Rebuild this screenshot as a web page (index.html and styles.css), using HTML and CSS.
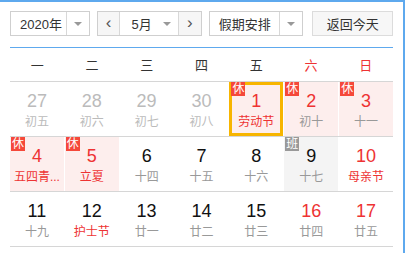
FILE: index.html
```html
<!DOCTYPE html>
<html lang="zh-CN">

<head>
    <meta charset="UTF-8">
    <title>万年历</title>
    <link rel="stylesheet" href="styles.css">
</head>

<body>
    <div class="calendar">
        <div class="toolbar">
            <div class="select year-select">
                <span class="select-text">2020年</span>
                <span class="select-arrow"><i class="caret"></i></span>
            </div>
            <div class="select month-select">
                <span class="step">&lsaquo;</span>
                <span class="month-body">
                    <span class="month-text">5月</span>
                    <i class="caret"></i>
                </span>
                <span class="step">&rsaquo;</span>
            </div>
            <div class="select holiday-select">
                <span class="select-text">假期安排</span>
                <span class="select-arrow"><i class="caret"></i></span>
            </div>
            <button class="today-btn">返回今天</button>
        </div>

        <div class="weekdays">
            <span>一</span>
            <span>二</span>
            <span>三</span>
            <span>四</span>
            <span>五</span>
            <span class="red">六</span>
            <span class="red">日</span>
        </div>

        <div class="week">
            <div class="day other"><b>27</b><small>初五</small></div>
            <div class="day other"><b>28</b><small>初六</small></div>
            <div class="day other"><b>29</b><small>初七</small></div>
            <div class="day other"><b>30</b><small>初八</small></div>
            <div class="day rest selected"><em class="tag">休</em><b>1</b><small class="fest">劳动节</small></div>
            <div class="day rest"><em class="tag">休</em><b>2</b><small>初十</small></div>
            <div class="day rest"><em class="tag">休</em><b>3</b><small>十一</small></div>
        </div>

        <div class="week">
            <div class="day rest"><em class="tag">休</em><b>4</b><small class="fest">五四青...</small></div>
            <div class="day rest"><em class="tag">休</em><b>5</b><small class="fest">立夏</small></div>
            <div class="day"><b>6</b><small>十四</small></div>
            <div class="day"><b>7</b><small>十五</small></div>
            <div class="day"><b>8</b><small>十六</small></div>
            <div class="day work"><em class="tag">班</em><b>9</b><small>十七</small></div>
            <div class="day weekend"><b>10</b><small class="fest">母亲节</small></div>
        </div>

        <div class="week">
            <div class="day"><b>11</b><small>十九</small></div>
            <div class="day"><b>12</b><small class="fest">护士节</small></div>
            <div class="day"><b>13</b><small>廿一</small></div>
            <div class="day"><b>14</b><small>廿二</small></div>
            <div class="day"><b>15</b><small>廿三</small></div>
            <div class="day weekend"><b>16</b><small>廿四</small></div>
            <div class="day weekend"><b>17</b><small>廿五</small></div>
        </div>
    </div>
</body>

</html>
```

FILE: styles.css
```css
body {
    margin: 0;
    font-family: "Liberation Sans", "Noto Sans CJK SC", sans-serif;
    background-color: #fff;
}

.calendar {
    width: 405px;
    height: 253px;
    box-sizing: border-box;
    border-top: 2px solid #5ea9ee;
    border-right: 2px solid #5ea9ee;
    padding: 9px 10px 0 10px;
}

.toolbar {
    display: flex;
    height: 25px;
    padding-bottom: 11px;
    border-bottom: 1px solid #5ea9ee;
}

.select {
    display: flex;
    height: 25px;
    box-sizing: border-box;
    border: 1px solid #cfcfcf;
    font-size: 13px;
    color: #333;
    background-color: #fff;
}

.select-text {
    display: flex;
    align-items: center;
    padding-left: 9px;
    border-right: 1px solid #d8d8d8;
}

.select-arrow {
    display: flex;
    align-items: center;
    justify-content: center;
    flex: 1;
}

.caret {
    width: 0;
    height: 0;
    border-left: 4px solid transparent;
    border-right: 4px solid transparent;
    border-top: 4px solid #999;
}

.year-select {
    width: 80px;
}

.year-select .select-text {
    width: 46px;
}

.month-select {
    width: 105px;
    margin-left: 7px;
    background-color: #f6f6f6;
}

.step {
    width: 22px;
    display: flex;
    align-items: center;
    justify-content: center;
    font-size: 17px;
    color: #555;
    line-height: 1;
    padding-bottom: 2px;
    box-sizing: border-box;
}

.month-body {
    display: flex;
    align-items: center;
    justify-content: space-between;
    width: 60px;
    padding: 0 7px 0 11px;
    box-sizing: border-box;
    background-color: #fff;
    border-left: 1px solid #d8d8d8;
    border-right: 1px solid #d8d8d8;
}

.holiday-select {
    width: 95px;
    margin-left: 7px;
}

.holiday-select .select-text {
    width: 60px;
}

.today-btn {
    width: 81px;
    height: 25px;
    margin-left: 9px;
    border: 1px solid #dcdcdc;
    background-color: #f7f7f7;
    font-family: inherit;
    font-size: 13px;
    color: #333;
    padding: 0;
}

.weekdays {
    display: grid;
    grid-template-columns: repeat(7, 1fr);
    height: 33px;
    align-items: center;
    font-size: 13px;
    color: #333;
    text-align: center;
    border-bottom: 1px solid #d6d6d6;
}

.weekdays .red {
    color: #e33;
}

.week {
    display: grid;
    grid-template-columns: repeat(7, 1fr);
    column-gap: 1px;
    height: 54px;
    border-bottom: 1px solid #d6d6d6;
}

.day {
    position: relative;
    display: flex;
    flex-direction: column;
    align-items: center;
    padding-top: 9px;
    box-sizing: border-box;
    min-width: 0;
}

.day b {
    font-weight: normal;
    font-size: 18px;
    line-height: 20px;
    color: #111;
}

.day small {
    margin-top: 3px;
    font-size: 12px;
    line-height: 16px;
    color: #999;
    white-space: nowrap;
}

.day .fest {
    color: #e33;
}

.other b,
.other small {
    color: #bbb;
}

.rest {
    background-color: #fdeeed;
}

.rest b,
.weekend b {
    color: #e33;
}

.work {
    background-color: #f4f4f4;
}

.tag {
    position: absolute;
    top: 0;
    left: 1px;
    width: 14px;
    height: 14px;
    font-style: normal;
    font-size: 12px;
    line-height: 14px;
    text-align: center;
    color: #fff;
    background-color: #f5483a;
}

.work .tag {
    background-color: #999;
}

.selected {
    border: 3px solid #f7b500;
    padding-top: 6px;
}

.selected .tag {
    top: -3px;
    left: -1px;
}
```
